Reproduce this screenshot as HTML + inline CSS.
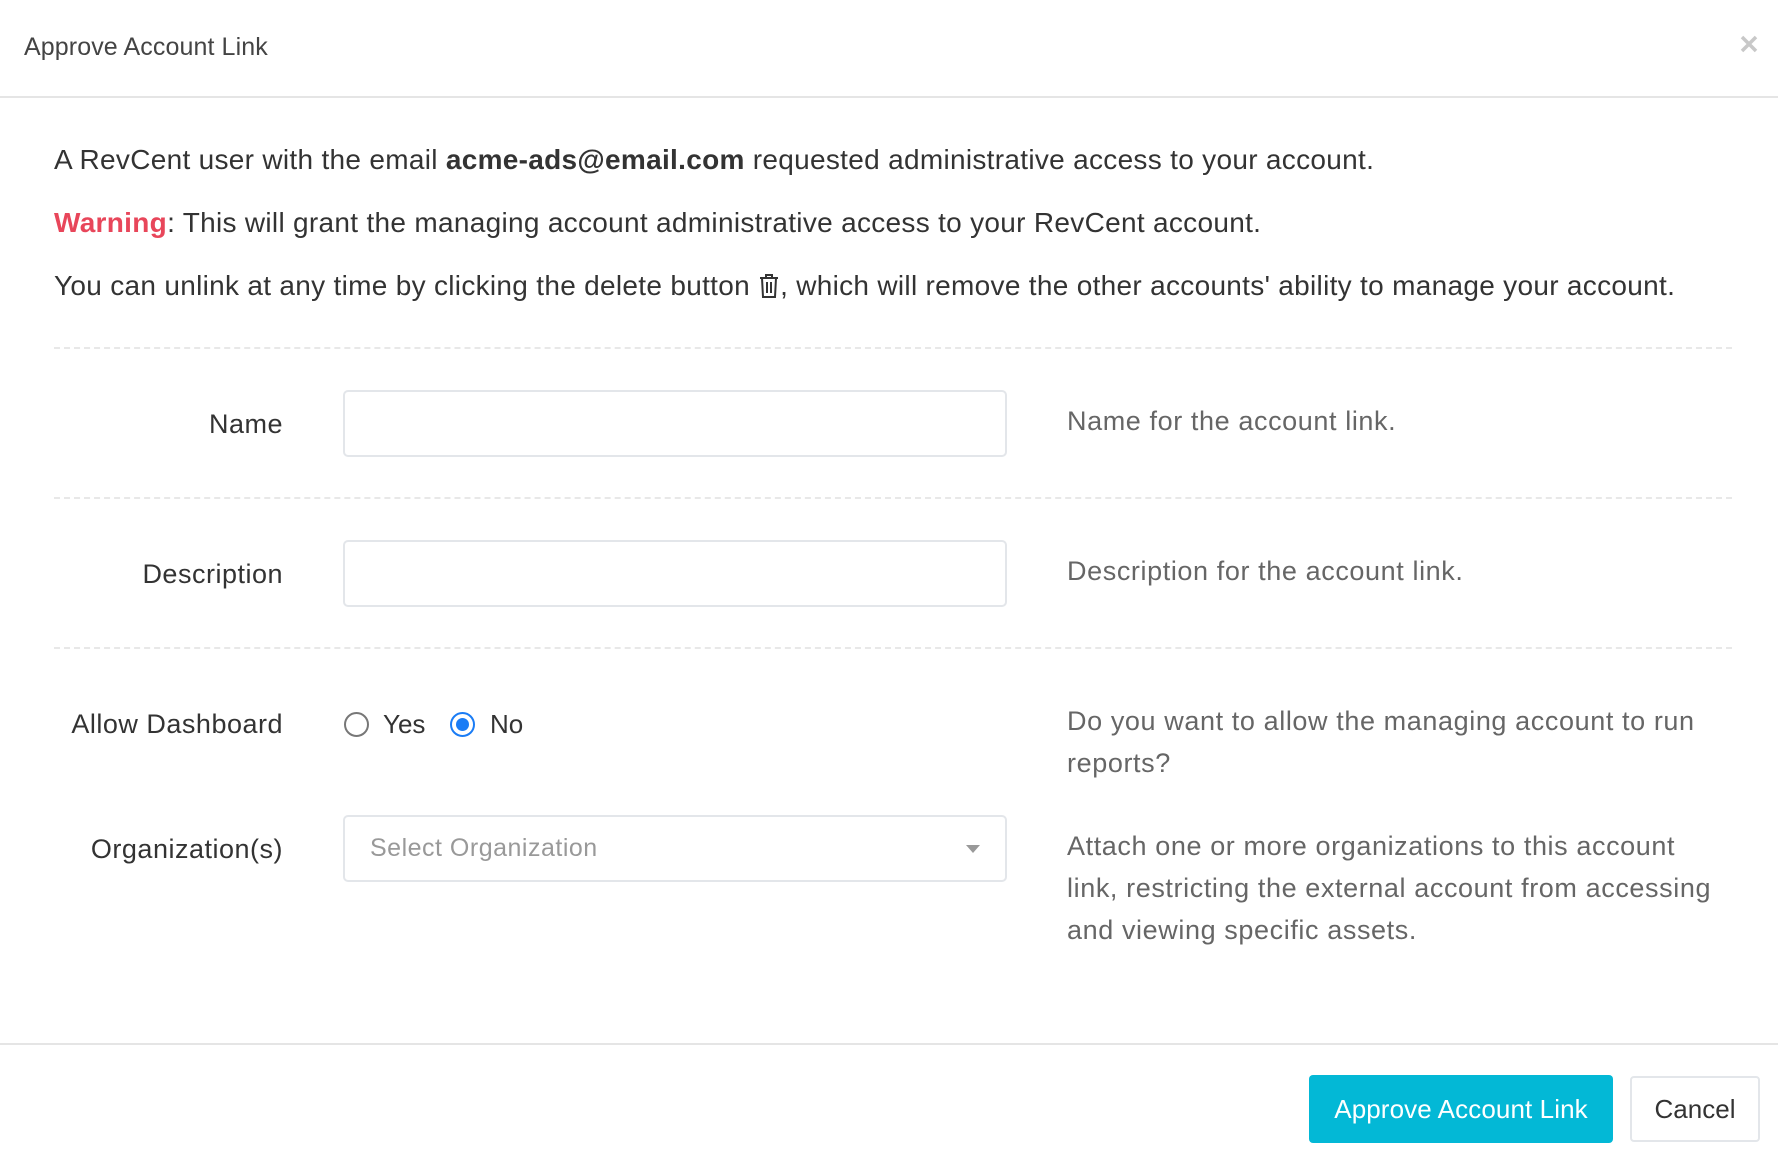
<!DOCTYPE html>
<html><head><meta charset="utf-8"><style>
*{margin:0;padding:0;box-sizing:border-box}
body{width:1778px;height:1170px;background:#fff;font-family:"Liberation Sans",sans-serif;color:#333;position:relative;overflow:hidden}
.a{position:absolute;white-space:nowrap}
.hr{position:absolute;left:0;width:1778px;height:2px;background:#e5e5e5}
.dash{position:absolute;left:54px;width:1678px;border-top:2px dashed #e8e8e8}
.p{left:54px;font-size:28px;letter-spacing:0.3px;color:#333}
.lbl{right:1495px;font-size:27px;letter-spacing:0.5px;color:#333}
.inp{position:absolute;left:343px;width:664px;height:67px;border:2px solid #e3e6ea;border-radius:5px;background:#fff}
.help{left:1067px;font-size:27px;letter-spacing:0.6px;color:#666;line-height:42px}
</style></head><body>
<div class="a" style="left:24px;top:33px;font-size:25px;color:#444;letter-spacing:0.1px">Approve Account Link</div>
<svg class="a" style="left:1740px;top:35px" width="18" height="18" viewBox="0 0 18 18"><path d="M2 2L16 16M16 2L2 16" stroke="#c8c8c8" stroke-width="3.5"/></svg>
<div class="hr" style="top:96px"></div>

<div class="a p" style="top:144px">A RevCent user with the email <b>acme-ads@email.com</b> requested administrative access to your account.</div>
<div class="a p" style="top:207px"><span style="color:#e8465a;font-weight:bold">Warning</span>: This will grant the managing account administrative access to your RevCent account.</div>
<div class="a p" style="top:270px">You can unlink at any time by clicking the delete button <svg width="22" height="26" viewBox="0 0 22 26" style="vertical-align:-4px"><path d="M2 5H20M8 5V2H14V5M4 5L5 24H17L18 5M9 9V20M13 9V20" stroke="#333" stroke-width="2" fill="none"/></svg>, which will remove the other accounts' ability to manage your account.</div>

<div class="dash" style="top:347px"></div>
<div class="a lbl" style="top:409px">Name</div>
<div class="inp" style="top:390px"></div>
<div class="a help" style="top:400px">Name for the account link.</div>

<div class="dash" style="top:497px"></div>
<div class="a lbl" style="top:559px">Description</div>
<div class="inp" style="top:540px"></div>
<div class="a help" style="top:550px">Description for the account link.</div>

<div class="dash" style="top:647px"></div>
<div class="a lbl" style="top:709px">Allow Dashboard</div>
<div class="a" style="left:344px;top:712px;width:25px;height:25px;border:2px solid #777;border-radius:50%"></div>
<div class="a" style="left:383px;top:709px;font-size:26px;color:#333">Yes</div>
<div class="a" style="left:450px;top:712px;width:25px;height:25px;border:2px solid #1a7cf5;border-radius:50%;background:#fff"><div style="position:absolute;left:4px;top:4px;width:13px;height:13px;border-radius:50%;background:#1a7cf5"></div></div>
<div class="a" style="left:490px;top:709px;font-size:26px;color:#333">No</div>
<div class="a help" style="top:700px">Do you want to allow the managing account to run<br>reports?</div>

<div class="a lbl" style="top:834px">Organization(s)</div>
<div class="inp" style="top:815px"></div>
<div class="a" style="left:370px;top:834px;font-size:25px;color:#999;letter-spacing:0.5px">Select Organization</div>
<div class="a" style="left:966px;top:845px;width:0;height:0;border-left:7px solid transparent;border-right:7px solid transparent;border-top:8px solid #999"></div>
<div class="a help" style="top:825px">Attach one or more organizations to this account<br>link, restricting the external account from accessing<br>and viewing specific assets.</div>

<div class="hr" style="top:1043px"></div>
<div class="a" style="left:1309px;top:1075px;width:304px;height:68px;background:#03b8d6;border-radius:4px;color:#fff;font-size:26px;line-height:68px;text-align:center;letter-spacing:0.1px">Approve Account Link</div>
<div class="a" style="left:1630px;top:1076px;width:130px;height:66px;border:2px solid #e3e6ea;border-radius:4px;color:#333;font-size:26px;line-height:62px;text-align:center">Cancel</div>
</body></html>
